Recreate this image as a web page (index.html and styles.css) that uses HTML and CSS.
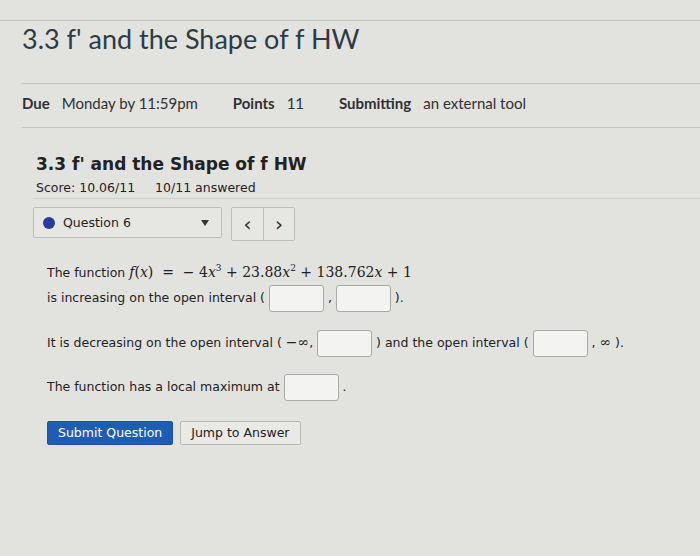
FILE: index.html
```html
<!DOCTYPE html>
<html lang="en">
<head>
    <meta charset="UTF-8">
    <meta name="viewport" content="width=device-width, initial-scale=1.0">
    <title>3.3 f' and the Shape of f HW</title>
    <link rel="stylesheet" href="styles.css">
</head>
<body>
    <div class="page">
        <header class="assignment-header">
            <h1>3.3 f' and the Shape of f HW</h1>
        </header>

        <div class="details">
            <span class="label">Due</span><span class="value">Monday by 11:59pm</span>
            <span class="label">Points</span><span class="value">11</span>
            <span class="label">Submitting</span><span class="value">an external tool</span>
        </div>

        <main class="tool">
            <h2>3.3 f' and the Shape of f HW</h2>
            <div class="score">
                <span>Score: 10.06/11</span>
                <span>10/11 answered</span>
            </div>

            <div class="question-nav">
                <div class="question-select">
                    <span class="dot"></span>
                    <span class="question-name">Question 6</span>
                    <span class="caret"></span>
                </div>
                <div class="arrows">
                    <button class="arrow">&lsaquo;</button>
                    <button class="arrow">&rsaquo;</button>
                </div>
            </div>

            <div class="question">
                <p class="first">
                    The function <span class="math"><i>f</i>(<i>x</i>) &nbsp;=&nbsp; &minus; 4<i>x</i><sup>3</sup> + 23.88<i>x</i><sup>2</sup> + 138.762<i>x</i> + 1</span><br>
                    is increasing on the open interval ( <input class="answer" type="text"> , <input class="answer" type="text"> ).
                </p>
                <p>
                    It is decreasing on the open interval ( <span class="math">&minus;&infin;</span>, <input class="answer" type="text"> ) and the open interval ( <input class="answer" type="text"> , <span class="math">&infin;</span> ).
                </p>
                <p>
                    The function has a local maximum at <input class="answer" type="text"> .
                </p>
            </div>

            <div class="actions">
                <button class="btn btn-primary">Submit Question</button>
                <button class="btn">Jump to Answer</button>
            </div>
        </main>
    </div>
</body>
</html>
```

FILE: styles.css
```css
body {
    margin: 0;
    background: #e2e2df;
    color: #2f3133;
    font-family: Lato, "Noto Sans", sans-serif;
}

.page {
    border-top: 1px solid #c4c4c1;
    margin-top: 20px;
}

.assignment-header {
    margin-left: 22px;
    padding: 1px 0 27px;
    border-bottom: 1px solid #c4c4c1;
}

.assignment-header h1 {
    margin: 0;
    font-size: 27px;
    line-height: 34px;
    font-weight: 400;
    color: #2d3b45;
}

.details {
    margin-left: 22px;
    padding: 9px 0 14px;
    border-bottom: 1px solid #c4c4c1;
    font-size: 15px;
    line-height: 20px;
}

.details .label {
    font-weight: 700;
    margin-right: 12px;
}

.details .value {
    margin-right: 31px;
}

.tool {
    padding: 25px 0 0 36px;
    font-family: "DejaVu Sans", Verdana, sans-serif;
    font-size: 12.5px;
    color: #222;
}

.tool h2 {
    margin: 0;
    font-size: 17px;
    line-height: 22px;
}

.score {
    margin-top: 4px;
    font-size: 12.5px;
    line-height: 18px;
}

.score span + span {
    margin-left: 16px;
}

.question-nav {
    display: flex;
    gap: 9px;
    margin: 1px 0 0 -3px;
    padding-top: 8px;
    border-top: 1px solid #cfcfcc;
}

.question-select {
    display: flex;
    align-items: center;
    width: 189px;
    height: 31px;
    box-sizing: border-box;
    padding: 0 12px 0 9px;
    border: 1px solid #bdbdba;
    border-radius: 2px;
    background: #e6e6e3;
}

.dot {
    width: 12px;
    height: 12px;
    border-radius: 50%;
    background: #2a3c9c;
    margin-right: 8px;
}

.question-name {
    flex: 1;
}

.caret {
    width: 0;
    height: 0;
    border-left: 4px solid transparent;
    border-right: 4px solid transparent;
    border-top: 6px solid #333;
}

.arrows {
    display: flex;
    height: 32px;
    border: 1px solid #bdbdba;
    border-radius: 2px;
}

.arrow {
    width: 31px;
    border: 0;
    background: #e6e6e3;
    font-size: 20px;
    line-height: 20px;
    color: #333;
    padding: 0;
    font-family: "DejaVu Sans", sans-serif;
}

.arrow + .arrow {
    border-left: 1px solid #bdbdba;
}

.question {
    padding: 15px 0 0 11px;
}

.question p {
    margin: 0 0 16px;
    line-height: 28px;
}

.question p.first {
    line-height: 24px;
    margin-bottom: 16px;
}

.math {
    font-family: "DejaVu Serif", "Liberation Serif", serif;
    font-size: 14px;
}

.math i {
    font-style: italic;
}

.math sup {
    font-size: 9px;
}

.answer {
    width: 55px;
    height: 27px;
    box-sizing: border-box;
    border: 1px solid #a9a9a6;
    border-radius: 3px;
    background: #f3f3f1;
    vertical-align: middle;
    margin: 0;
}

.actions {
    display: flex;
    gap: 7px;
    padding: 4px 0 0 11px;
}

.btn {
    height: 24px;
    padding: 0 10px;
    border: 1px solid #b8b8b5;
    border-radius: 2px;
    background: #e9e9e6;
    font-family: "DejaVu Sans", Verdana, sans-serif;
    font-size: 12.5px;
    color: #222;
}

.btn-primary {
    background: #1f5db5;
    border-color: #1b54a4;
    color: #fff;
}
```
